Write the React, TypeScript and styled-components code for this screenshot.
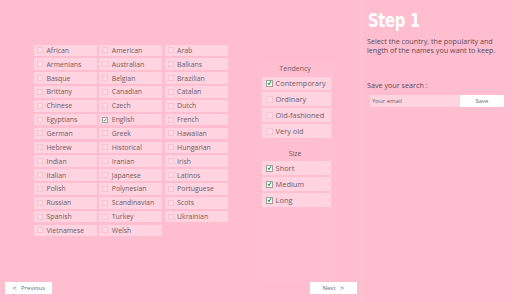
import React from "react";
import styled, { createGlobalStyle } from "styled-components";

const Global = createGlobalStyle`
  html, body { margin: 0; padding: 0; background: #ffbdd0; }
  body { font-family: "Open Sans", "Noto Sans", sans-serif; }
`;

const Page = styled.div`
  width: 512px;
  height: 302px;
  display: flex;
  background: #ffbdd0;
  overflow: hidden;
`;

const LeftPane = styled.div`
  width: 363px;
  height: 302px;
  display: flex;
  flex-direction: column;
`;

const ContentRow = styled.div`
  flex: 1;
  min-height: 0;
  display: flex;
  align-items: flex-start;
`;

const Grid = styled.div`
  margin: 44.5px 0 0 34px;
  display: grid;
  grid-template-columns: repeat(3, 63px);
  grid-auto-rows: 11.6px;
  column-gap: 2.3px;
  row-gap: 2.27px;
`;

const Cell = styled.div`
  display: flex;
  align-items: center;
  background: #ffd4e0;
  padding-left: 3px;
  font-size: 6.9px;
  color: #6e5a62;
  white-space: nowrap;
`;

const Box = styled.span<{ $checked?: boolean; $big?: boolean }>`
  box-sizing: border-box;
  width: ${(p) => (p.$big ? 7 : 6)}px;
  height: ${(p) => (p.$big ? 7 : 6)}px;
  margin-right: ${(p) => (p.$big ? 3 : 3.5)}px;
  flex: none;
  border: 0.6px solid ${(p) => (p.$checked ? "#a89aa0" : "#f3c3d1")};
  background: ${(p) => (p.$checked ? "#ffffff" : "#ffdbe5")};
  display: flex;
  align-items: center;
  justify-content: center;
`;

const OptionsPanel = styled.div`
  margin: 62px 0 0 32px;
  width: 72px;
  align-self: stretch;
  padding: 1px 1px 0 2px;
  background: rgba(255, 255, 255, 0.04);
  box-shadow: inset -1px 0 0 rgba(255, 255, 255, 0.1);
  box-sizing: border-box;
`;

const GroupTitle = styled.div<{ $top?: number }>`
  text-align: center;
  font-size: 7px;
  color: #6e5a62;
  height: 12px;
  line-height: 12px;
  margin-top: ${(p) => p.$top ?? 0}px;
  margin-bottom: 1.5px;
  padding-right: 2px;
`;

const Option = styled.div`
  height: 13.4px;
  margin-bottom: 2.6px;
  width: 69px;
  display: flex;
  align-items: center;
  background: #ffd4e0;
  padding-left: 4px;
  box-sizing: border-box;
  font-size: 7.4px;
  color: #6e5a62;
`;

const Footer = styled.div`
  flex: none;
  display: flex;
  justify-content: space-between;
  padding: 0 4px 8px 5px;
`;

const NavButton = styled.div`
  width: 47px;
  height: 12.5px;
  background: #ffffff;
  font-size: 6px;
  color: #6b6b6b;
  display: flex;
  align-items: center;
  justify-content: center;
  gap: 4px;
`;

const Arrow = styled.span`
  font-family: "DejaVu Sans", sans-serif;
  font-size: 6px;
  line-height: 1;
`;

const RightPane = styled.div`
  flex: 1;
  border-left: 1px solid #ffc9d8;
  padding: 10px 8px 0 5px;
  box-sizing: border-box;
`;

const StepTitle = styled.div`
  font-family: "DejaVu Sans Condensed", "DejaVu Sans", sans-serif;
  font-weight: bold;
  font-size: 19px;
  line-height: 21px;
  color: #ffffff;
  transform: scaleX(0.86);
  transform-origin: left;
  letter-spacing: -0.3px;
  margin-left: 1px;
`;

const Desc = styled.div`
  font-size: 7.2px;
  line-height: 9.5px;
  color: #5e4a54;
  margin-top: 5.5px;
`;

const SaveLabel = styled.div`
  font-size: 7.2px;
  color: #5e4a54;
  margin-top: 24.5px;
`;

const SaveRow = styled.div`
  display: flex;
  margin: 5px 0 0 3px;
  height: 11.5px;
`;

const EmailInput = styled.div`
  width: 88px;
  background: #ffd4e0;
  font-size: 6px;
  color: #6e5a62;
  display: flex;
  align-items: center;
  padding-left: 2px;
`;

const SaveButton = styled.div`
  width: 44px;
  background: #ffffff;
  font-size: 6px;
  color: #6b6b6b;
  display: flex;
  align-items: center;
  justify-content: center;
`;

const Check = () => (
  <svg width="6" height="6" viewBox="0 0 6 6">
    <path d="M1.2 3.1 L2.4 4.8 L4.8 0.9" fill="none" stroke="#12a82c" strokeWidth="1.3" />
  </svg>
);

const countries = [
  "African", "American", "Arab",
  "Armenians", "Australian", "Balkans",
  "Basque", "Belgian", "Brazilian",
  "Brittany", "Canadian", "Catalan",
  "Chinese", "Czech", "Dutch",
  "Egyptians", "English", "French",
  "German", "Greek", "Hawaiian",
  "Hebrew", "Historical", "Hungarian",
  "Indian", "Iranian", "Irish",
  "Italian", "Japanese", "Latinos",
  "Polish", "Polynesian", "Portuguese",
  "Russian", "Scandinavian", "Scots",
  "Spanish", "Turkey", "Ukrainian",
  "Vietnamese", "Welsh",
];

const tendencies: [string, boolean][] = [
  ["Contemporary", true],
  ["Ordinary", false],
  ["Old-fashioned", false],
  ["Very old", false],
];

const sizes = ["Short", "Medium", "Long"];

export default function App() {
  return (
    <Page>
      <Global />
      <LeftPane>
        <ContentRow>
          <Grid>
            {countries.map((c) => {
              const checked = c === "English";
              return (
                <Cell key={c}>
                  <Box $checked={checked}>{checked && <Check />}</Box>
                  {c}
                </Cell>
              );
            })}
          </Grid>
          <OptionsPanel>
            <GroupTitle>Tendency</GroupTitle>
            {tendencies.map(([t, on]) => (
              <Option key={t}>
                <Box $big $checked={on}>{on && <Check />}</Box>
                {t}
              </Option>
            ))}
            <GroupTitle $top={10}>Size</GroupTitle>
            {sizes.map((s) => (
              <Option key={s}>
                <Box $big $checked>
                  <Check />
                </Box>
                {s}
              </Option>
            ))}
          </OptionsPanel>
        </ContentRow>
        <Footer>
          <NavButton>
            <Arrow>&lt;</Arrow>
            <span>Previous</span>
          </NavButton>
          <NavButton>
            <span>Next</span>
            <Arrow>&gt;</Arrow>
          </NavButton>
        </Footer>
      </LeftPane>
      <RightPane>
        <StepTitle>Step 1</StepTitle>
        <Desc>
          Select the country, the popularity and
          <br />
          length of the names you want to keep.
        </Desc>
        <SaveLabel>Save your search :</SaveLabel>
        <SaveRow>
          <EmailInput>Your email</EmailInput>
          <SaveButton>Save</SaveButton>
        </SaveRow>
      </RightPane>
    </Page>
  );
}
